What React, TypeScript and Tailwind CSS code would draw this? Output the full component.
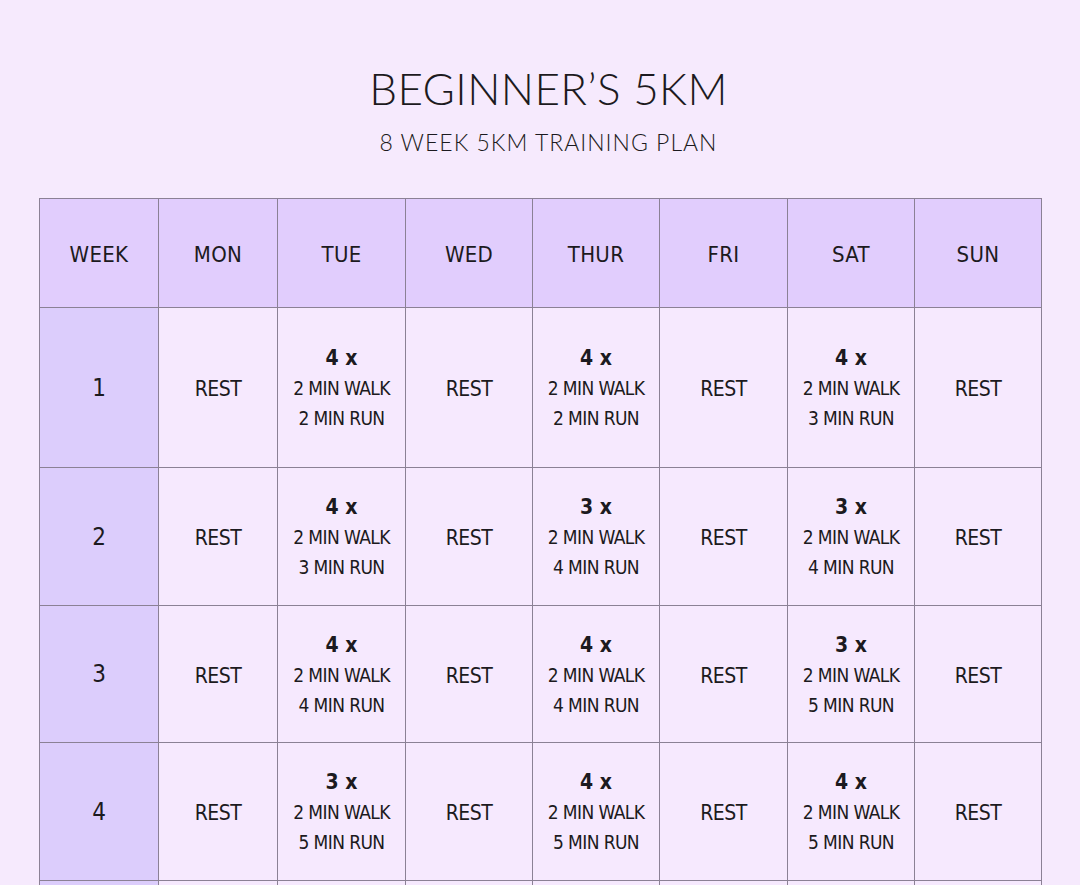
import React from 'react';

type Cell = string | { reps: string; walk: string; run: string };

const days = ['MON', 'TUE', 'WED', 'THUR', 'FRI', 'SAT', 'SUN'];
const widths = ['w-[119px]', 'w-[119px]', 'w-[128px]', 'w-[127px]', 'w-[127px]', 'w-[128px]', 'w-[127px]', 'w-[127px]'];

const plan: { week: string; h: string; cells: Cell[] }[] = [
  {
    week: '1',
    h: 'h-[160px]',
    cells: ['REST', { reps: '4', walk: '2', run: '2' }, 'REST', { reps: '4', walk: '2', run: '2' }, 'REST', { reps: '4', walk: '2', run: '3' }, 'REST'],
  },
  {
    week: '2',
    h: 'h-[138px]',
    cells: ['REST', { reps: '4', walk: '2', run: '3' }, 'REST', { reps: '3', walk: '2', run: '4' }, 'REST', { reps: '3', walk: '2', run: '4' }, 'REST'],
  },
  {
    week: '3',
    h: 'h-[137px]',
    cells: ['REST', { reps: '4', walk: '2', run: '4' }, 'REST', { reps: '4', walk: '2', run: '4' }, 'REST', { reps: '3', walk: '2', run: '5' }, 'REST'],
  },
  {
    week: '4',
    h: 'h-[138px]',
    cells: ['REST', { reps: '3', walk: '2', run: '5' }, 'REST', { reps: '4', walk: '2', run: '5' }, 'REST', { reps: '4', walk: '2', run: '5' }, 'REST'],
  },
];

const hand = { fontFamily: '"DejaVu Sans Condensed", "DejaVu Sans", sans-serif' };

function Workout({ cell }: { cell: Cell }) {
  if (typeof cell === 'string') {
    return <span className="inline-block pt-[5px] text-[21px] tracking-[-0.5px]">{cell}</span>;
  }
  return (
    <div className="flex flex-col items-center pt-[1px] leading-[30px]">
      <span className="text-[21px] font-bold">{cell.reps} x</span>
      <span className="text-[19px] tracking-[-0.6px]">{cell.walk} MIN WALK</span>
      <span className="text-[19px] tracking-[-0.6px]">{cell.run} MIN RUN</span>
    </div>
  );
}

export default function App() {
  return (
    <div className="min-h-screen bg-[#f6eafd] text-[#1c1a20] overflow-hidden">
      <div className="h-[885px] overflow-hidden">
        <header className="flex flex-col items-center pl-[17px] pt-[61px]" style={{ fontFamily: 'Lato, "Open Sans", sans-serif' }}>
          <h1 className="text-[44px] font-light leading-[54px] tracking-[0.4px]">BEGINNER’S 5KM</h1>
          <p className="mt-[13px] text-[23px] font-light leading-[28px] tracking-[1px] text-[#1c1a20]">8 WEEK 5KM TRAINING PLAN</p>
        </header>

        <table className="ml-[39px] mt-[42px] border-collapse table-fixed" style={hand}>
          <thead>
            <tr className="h-[109px] bg-[#e1cdfd]">
              {['WEEK', ...days].map((d, i) => (
                <th key={d} className={`${widths[i]} border border-[#8b8195] pt-[2px] text-[22px] font-normal tracking-[0.3px] text-center align-middle`}>
                  {d}
                </th>
              ))}
            </tr>
          </thead>
          <tbody>
            {plan.map((row) => (
              <tr key={row.week} className={row.h}>
                <td className="border border-[#8b8195] bg-[#dccdfc] text-center align-middle text-[24px] font-medium">
                  {row.week}
                </td>
                {row.cells.map((c, i) => (
                  <td key={i} className="border border-[#8b8195] bg-[#f6e9fe] text-center align-middle">
                    <Workout cell={c} />
                  </td>
                ))}
              </tr>
            ))}
            <tr className="h-[138px]">
              <td className="border border-[#8b8195] bg-[#dccdfc]" />
              {days.map((d) => (
                <td key={d} className="border border-[#8b8195] bg-[#f6e9fe]" />
              ))}
            </tr>
          </tbody>
        </table>
      </div>
    </div>
  );
}
